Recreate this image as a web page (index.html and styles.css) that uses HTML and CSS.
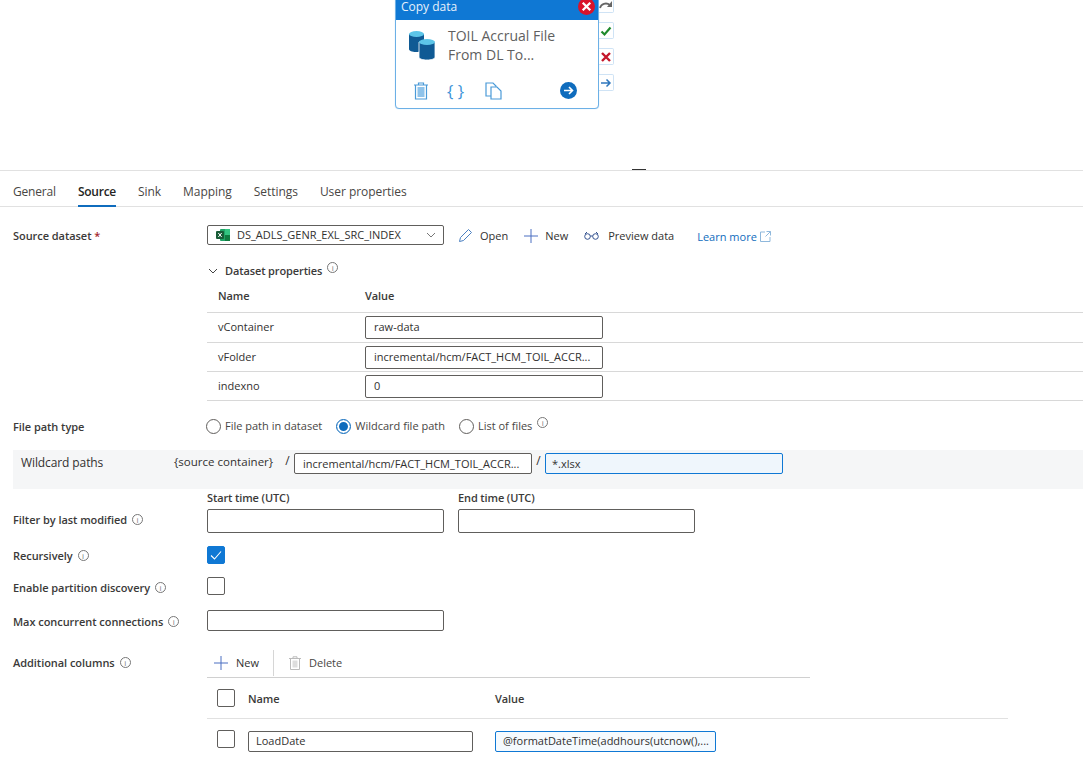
FILE: index.html
```html
<!DOCTYPE html>
<html lang="en">
<head>
<meta charset="utf-8">
<title>Copy data - Source</title>
<link rel="stylesheet" href="styles.css">
</head>
<body>
<section class="canvas">
  <div class="node">
    <div class="node-head"><span>Copy data</span>
      <svg class="node-close" viewBox="0 0 18 18" width="17" height="17"><circle cx="9" cy="9" r="9" fill="#d9142b"/><path d="M5 5l8 8M13 5l-8 8" stroke="#fff" stroke-width="2.400"/></svg>
    </div>
    <div class="node-body">
      <svg class="node-icon" viewBox="0 0 30 32" width="30" height="32">
        <path d="M1 5v15c0 2 3 3 7 3s8-1 8-3V5z" fill="#0f5a94"/><ellipse cx="8.500" cy="5" rx="7.500" ry="3" fill="#5cc5e8"/>
        <path d="M11 13v15c0 2 4 3 8 3s8-1 8-3V13z" fill="#0f5a94" stroke="#fff" stroke-width=".8"/><ellipse cx="19" cy="13" rx="8" ry="3" fill="#5cc5e8"/>
      </svg>
      <div class="node-title">TOIL Accrual File<br>From DL To...</div>
    </div>
    <div class="node-actions">
      <svg viewBox="0 0 16 18" width="16" height="18"><path d="M1 3h14M5.500 3V1h5v2M2.500 3v14h11V3" fill="none" stroke="#4a9ad8" stroke-width="1.200"/><path d="M4.500 5h7v10h-7z" fill="#8fc3ea"/></svg>
      <span class="braces">{ }</span>
      <svg class="node-copy" viewBox="0 0 17 18" width="17" height="18"><path d="M1 1h7l3 3v10H1z" fill="#fff" stroke="#4a9ad8" stroke-width="1.200"/><path d="M6 5h6l4 4v8H6z" fill="#fff" stroke="#4a9ad8" stroke-width="1.200"/></svg>
      <svg class="node-go" viewBox="0 0 17 17" width="17" height="17"><circle cx="8.500" cy="8.500" r="8.500" fill="#0f6cbd"/><path d="M4 8.500h8.500M9 5l3.500 3.500L9 12" fill="none" stroke="#fff" stroke-width="1.600"/></svg>
    </div>
  </div>
  <div class="ports">
    <span class="port port-top"><svg viewBox="0 0 14 10" width="14" height="10"><path d="M1 8c1-4 6-6 10-3" fill="none" stroke="#666" stroke-width="1.800"/><path d="M13 1v6H8z" fill="#666"/></svg></span>
    <span class="port"><svg viewBox="0 0 12 12" width="12" height="12"><path d="M1.500 6.500l3 3 6-7" fill="none" stroke="#1f8a2c" stroke-width="2.200"/></svg></span>
    <span class="port"><svg viewBox="0 0 12 12" width="12" height="12"><path d="M2 2l8 8M10 2l-8 8" stroke="#c4162a" stroke-width="2.400"/></svg></span>
    <span class="port"><svg viewBox="0 0 12 12" width="12" height="12"><path d="M1 6h9M6.500 2.500L10 6l-3.500 3.500" fill="none" stroke="#2f77bd" stroke-width="1.500"/></svg></span>
  </div>
  <span class="splitter"></span>
</section>

<nav class="tabs">
  <a class="tab tab-first">General</a>
  <a class="tab active">Source</a>
  <a class="tab">Sink</a>
  <a class="tab">Mapping</a>
  <a class="tab">Settings</a>
  <a class="tab">User properties</a>
</nav>

<main class="form">
  <div class="row row-dataset">
    <div class="label label-strong">Source dataset <span class="req">*</span></div>
    <div class="field toolbar">
      <div class="select">
        <svg class="xl" viewBox="0 0 14 14" width="14" height="14"><rect x="4" y="1" width="10" height="12" rx="1" fill="#21a366"/><rect x="9" y="1" width="5" height="6" fill="#33c481"/><rect x="9" y="7" width="5" height="6" fill="#107c41"/><rect y="3" width="8" height="8" rx="1" fill="#185c37"/><path d="M2.300 5l3.400 4M5.700 5L2.300 9" stroke="#fff" stroke-width="1"/></svg>
        <span class="select-text">DS_ADLS_GENR_EXL_SRC_INDEX</span>
        <svg class="chev" viewBox="0 0 10 6" width="10" height="6"><path d="M1 1l4 4 4-4" fill="none" stroke="#777" stroke-width="1"/></svg>
      </div>
      <span class="cmd cmd-open"><svg viewBox="0 0 15 15" width="15" height="15"><path d="M1.500 13.500l1-4L10.500 1.500l3 3-8 8z" fill="none" stroke="#4a7fc1" stroke-width="1"/></svg>Open</span>
      <span class="cmd cmd-new"><svg viewBox="0 0 14 14" width="14" height="14"><path d="M7 0v14M0 7h14" stroke="#4a6fc1" stroke-width="1"/></svg>New</span>
      <span class="cmd cmd-prev"><svg viewBox="0 0 15 9" width="15" height="9"><circle cx="3.500" cy="5.500" r="2.800" fill="none" stroke="#33518f" stroke-width="1"/><circle cx="11.500" cy="5.500" r="2.800" fill="none" stroke="#33518f" stroke-width="1"/><path d="M6.300 5h2.400M1 3l2-2M14 3l-2-2" fill="none" stroke="#33518f"/></svg>Preview data</span>
      <a class="learn">Learn more <svg viewBox="0 0 11 11" width="11" height="11"><path d="M5 1H.5v9.500H10V6M6.500.5h4v4M10.500.5L5.500 5.500" fill="none" stroke="#8fb8dc"/></svg></a>
    </div>
  </div>

  <div class="props-head">
    <svg viewBox="0 0 10 6" width="10" height="6"><path d="M1 1l4 4 4-4" fill="none" stroke="#444" stroke-width="1"/></svg>
    <span>Dataset properties</span><i class="info info-up">i</i>
  </div>
  <div class="props">
    <div class="props-row props-top"><b class="pname">Name</b><b>Value</b></div>
    <div class="props-row props-first"><span class="pname">vContainer</span><span class="input pinput">raw-data</span></div>
    <div class="props-row"><span class="pname">vFolder</span><span class="input pinput">incremental/hcm/FACT_HCM_TOIL_ACCR...</span></div>
    <div class="props-row"><span class="pname">indexno</span><span class="input pinput">0</span></div>
  </div>

  <div class="row row-path">
    <div class="label label-strong path-label">File path type</div>
    <div class="field radios">
      <label class="radio"><i class="dot"></i>File path in dataset</label>
      <label class="radio"><i class="dot on"></i>Wildcard file path</label>
      <label class="radio"><i class="dot"></i>List of files<i class="info info-up">i</i></label>
    </div>
  </div>

  <div class="wild">
    <span class="wild-label">Wildcard paths</span>
    <span class="wild-src">{source container}</span>
    <span class="slash">/</span>
    <span class="input wild-a">incremental/hcm/FACT_HCM_TOIL_ACCR...</span>
    <span class="slash">/</span>
    <span class="input wild-b">*.xlsx</span>
  </div>

  <div class="row row-filter">
    <div class="label label-strong filter-label">Filter by last modified<i class="info">i</i></div>
    <div class="field times">
      <div class="time"><div class="time-label">Start time (UTC)</div><span class="input tinput"></span></div>
      <div class="time"><div class="time-label">End time (UTC)</div><span class="input tinput"></span></div>
    </div>
  </div>

  <div class="row row-check row-rec">
    <div class="label label-strong">Recursively<i class="info">i</i></div>
    <span class="check on"><svg viewBox="0 0 18 18" width="18" height="18"><path d="M4 9.500l3.500 3.500L14 5.500" fill="none" stroke="#fff" stroke-width="1.100"/></svg></span>
  </div>
  <div class="row row-check row-part">
    <div class="label label-strong label-low">Enable partition discovery<i class="info">i</i></div>
    <span class="check"></span>
  </div>
  <div class="row row-check row-max">
    <div class="label label-strong label-low">Max concurrent connections<i class="info">i</i></div>
    <span class="input max-input"></span>
  </div>

  <div class="row row-add">
    <div class="label label-strong add-label">Additional columns<i class="info">i</i></div>
    <div class="field add">
      <div class="add-bar">
        <span class="cmd add-new"><svg viewBox="0 0 14 14" width="14" height="14"><path d="M7 0v14M0 7h14" stroke="#4a6fc1" stroke-width="1"/></svg>New</span>
        <span class="cmd add-del"><svg viewBox="0 0 12 14" width="12" height="14"><path d="M0 2.500h12M4 2.500V.8h4v1.700M1.500 2.500V13.500h9V2.500" fill="none" stroke="#bbb"/><path d="M3.500 4.500h5v7h-5z" fill="#ddd"/></svg>Delete</span>
      </div>
      <div class="add-head">
        <span class="check"></span><b class="col-name">Name</b><b class="col-value">Value</b>
      </div>
      <div class="add-row">
        <span class="check add-check"></span>
        <span class="input add-name">LoadDate</span>
        <span class="input add-value">@formatDateTime(addhours(utcnow(),...</span>
      </div>
    </div>
  </div>
</main>
</body>
</html>
```
FILE: styles.css
```css
* { box-sizing: border-box; }
html, body { margin: 0; padding: 0; }
body {
  width: 1083px;
  height: 780px;
  overflow: hidden;
  background: #fff;
  color: #323130;
  font-family: "Open Sans", "Noto Sans", "Liberation Sans", sans-serif;
  font-size: 11px;
  line-height: 16px;
}
b { font-weight: 600; color: #3b3a39; letter-spacing: -.1px; }

.canvas { position: relative; height: 171px; border-bottom: 1px solid #e1e1e1; }
.node {
  position: absolute; left: 395px; top: -7px; width: 204px; height: 116px;
  background: #fff; border: 1px solid #6cb0e6; border-radius: 4px; overflow: hidden;
  box-shadow: 0 0 1px #9cc9ee;
}
.node-head {
  height: 26px; padding: 5px 0 0 5px; background: #0f78d4; color: #e6f1fb; font-size: 12px;
  display: flex; justify-content: space-between;
}
.node-close { margin: -1px 3px 0 0; }
.node-body { display: flex; padding: 6px 0 0 12px; height: 57px; }
.node-icon { margin-top: 3px; }
.node-title { margin-left: 10px; font-size: 14px; line-height: 19px; color: #5f5f5f; }
.node-actions { display: flex; align-items: center; height: 24px; padding-left: 17px; position: relative; margin-top: 2px; }
.braces { color: #3f94d8; font-size: 17px; font-weight: 400; margin-left: 18px; width: 20px; white-space: nowrap; }
.node-copy { margin-left: 18px; }
.node-go { position: absolute; left: 164px; top: 3px; }
.ports { position: absolute; left: 599px; top: -3px; width: 16px; display: flex; flex-direction: column; gap: 9px; }
.port { width: 15px; height: 17px; background: #fff; border: 1px solid #cfe3f5; border-left: 0; border-radius: 0 2px 2px 0; display: flex; align-items: center; justify-content: center; }
.port-top { height: 16px; }
.splitter { position: absolute; left: 632px; top: 169px; width: 14px; height: 1px; background: #333; }

.tabs { display: flex; gap: 22px; height: 36px; padding: 0 13px; border-bottom: 1px solid #e1e1e1; }
.tab { height: 36px; padding-top: 13px; font-size: 12px; color: #484644; letter-spacing: -.05px; }
.tab-first { letter-spacing: -.18px; }
.tab.active { color: #252423; border-bottom: 2px solid #0f6cbd; font-weight: 600; letter-spacing: -.25px; }

.form { padding-top: 17px; }
.row { display: flex; padding-left: 13px; }
.label { width: 194px; flex: none; white-space: nowrap; }
.label-strong { color: #3b3a39; font-weight: 600; letter-spacing: -.05px; padding-top: 2px; }
.label-low { padding-top: 4px; }
.req { color: #a4262c; }
.input {
  display: block; height: 23px; padding: 2px 8px 0; background: #fff;
  border: 1px solid #605e5c; border-radius: 2px; color: #323130; white-space: nowrap; overflow: hidden;
}

.row-dataset { height: 22px; align-items: center; }
.toolbar { display: flex; align-items: center; }
.select {
  width: 237px; height: 20px; padding: 0 7px 0 8px; display: flex; align-items: center;
  border: 1px solid #605e5c; border-radius: 2px;
}
.select-text { margin-left: 7px; flex: 1; white-space: nowrap; }
.cmd { display: inline-flex; align-items: center; white-space: nowrap; color: #323130; line-height: 18px; }
.cmd-open { margin-left: 14px; gap: 7px; padding-top: 1px; }
.cmd-new { margin-left: 16px; gap: 7px; padding-top: 1px; }
.cmd-prev { margin-left: 16px; gap: 9px; padding-top: 1px; }
.learn { margin-left: 23px; display: inline-flex; align-items: center; gap: 3px; color: #0f6cbd; padding-top: 3px; }

.props-head { display: flex; align-items: center; height: 18px; margin: 16px 0 0 208px; font-weight: 600; letter-spacing: -.12px; color: #3b3a39; }
.props-head span { margin-left: 7px; }
.props { margin: 5px 0 0 207px; }
.props-row { display: flex; align-items: center; height: 29px; border-bottom: 1px solid #d8d8d8; padding: 0 0 0 11px; }
.props-top { height: 28px; padding-bottom: 6px; }
.props-first { height: 30px; }
.props-first .pname { padding-bottom: 2px; }
.pname { width: 147px; flex: none; }
.pinput { width: 238px; height: 23px; }

.row-path { height: 22px; margin-top: 14px; align-items: center; }
.path-label { padding-top: 2px; }
.radios { display: flex; gap: 14px; margin-left: -1px; }
.radio { display: inline-flex; align-items: center; white-space: nowrap; color: #484644; }
.dot { width: 15px; height: 15px; margin-right: 4px; border: 1px solid #605e5c; border-radius: 50%; background: #fff; }
.dot.on { border-color: #0f6cbd; box-shadow: inset 0 0 0 2px #fff, inset 0 0 0 8px #0f6cbd; }

.wild { display: flex; align-items: flex-start; height: 39px; margin: 13px 0 0 13px; padding: 3px 0 0 8px; background: #f5f6f7; }
.wild-label { width: 152px; font-size: 12px; flex: none; padding-top: 2px; letter-spacing: -.1px; }
.wild-src { font-size: 11.500px; width: 108px; flex: none; white-space: nowrap; padding: 1px 0 0 1px; letter-spacing: .02px; }
.slash { width: 13px; flex: none; text-align: center; font-size: 12px; }
.wild-a { width: 238px; height: 21px; flex: none; }
.wild-b { width: 238px; height: 21px; flex: none; padding-left: 6px; background: #eff6fc; border-color: #0f78d4; }

.row-filter { height: 44px; }
.filter-label { padding-top: 23px; }
.times { display: flex; gap: 14px; }
.time-label { font-weight: 600; height: 20px; padding-top: 1px; letter-spacing: -.12px; color: #3b3a39; }
.tinput { width: 237px; height: 24px; }

.row-check { align-items: center; }
.row-rec { height: 22px; margin-top: 11px; }
.row-part { height: 22px; margin-top: 9px; }
.row-max { height: 24px; margin-top: 11px; }
.max-input { width: 237px; height: 21px; }
.check { display: block; width: 18px; height: 18px; flex: none; border: 1px solid #605e5c; border-radius: 2px; background: #fff; }
.check.on { background: #0f78d4; border-color: #0f78d4; }
.check.on svg { display: block; margin: -1px; }
.info {
  display: inline-block; width: 11px; height: 11px; margin-left: 5px; border: 1px solid #777; border-radius: 50%;
  font-style: normal; font-weight: 400; font-size: 8px; line-height: 9px; text-align: center; color: #777; vertical-align: 1px; letter-spacing: 0;
}
.info-up { position: relative; top: -4px; }

.row-add { margin-top: 16px; }
.add-label { padding-top: 7px; }
.add-bar { display: flex; align-items: center; width: 603px; height: 30px; padding: 0 0 0 7px; border-bottom: 1px solid #d0d0d0; }
.add-new { gap: 8px; padding-right: 14px; border-right: 1px solid #d6d6d6; height: 26px; }
.add-del { gap: 8px; margin-left: 15px; color: #484644; }
.add-head { display: flex; align-items: center; width: 801px; height: 41px; padding-left: 10px; border-bottom: 1px solid #e1e1e1; }
.col-name { margin-left: 13px; width: 247px; padding-top: 2px; }
.col-value { padding-top: 2px; }
.add-row { display: flex; align-items: flex-start; height: 43px; padding-left: 10px; }
.add-check { margin-top: 11px; }
.add-name { margin: 12px 0 0 13px; width: 225px; height: 21px; padding: 1px 0 0 7px; }
.add-value { margin: 12px 0 0 22px; width: 221px; height: 21px; padding: 1px 0 0 7px; background: #f5fafe; border-color: #0f78d4; }
```
